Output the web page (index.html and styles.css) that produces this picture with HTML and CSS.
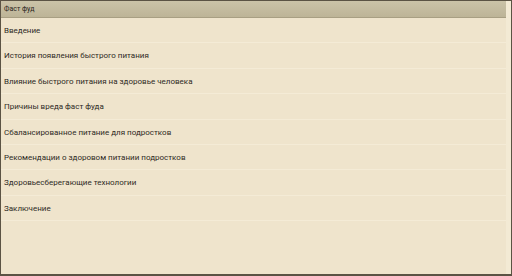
FILE: index.html
```html
<!DOCTYPE html>
<html lang="ru">
<head>
    <meta charset="UTF-8">
    <title>Фаст фуд</title>
    <link rel="stylesheet" href="styles.css">
</head>
<body>
    <div class="screen">
        <div class="title-bar">Фаст фуд</div>
        <ul class="topic-list">
            <li class="topic">Введение</li>
            <li class="topic">История появления быстрого питания</li>
            <li class="topic">Влияние быстрого питания на здоровье человека</li>
            <li class="topic">Причины вреда фаст фуда</li>
            <li class="topic">Сбалансированное питание для подростков</li>
            <li class="topic">Рекомендации о здоровом питании подростков</li>
            <li class="topic">Здоровьесберегающие технологии</li>
            <li class="topic">Заключение</li>
        </ul>
    </div>
</body>
</html>
```

FILE: styles.css
```css
* {
    margin: 0;
    padding: 0;
    box-sizing: border-box;
}

html, body {
    width: 512px;
    height: 276px;
    overflow: hidden;
}

body {
    font-family: Roboto, 'Noto Sans', sans-serif;
    background: #5b5344;
}

.screen {
    margin: 1px 1px 2px 1px;
    height: 273px;
    background: #efe4cc;
    border-right: 5px solid #f3ead4;
    display: flex;
    flex-direction: column;
}

.title-bar {
    height: 17px;
    padding: 0 3px;
    font-size: 7px;
    line-height: 17px;
    color: #2a2620;
    background: linear-gradient(to bottom, #cbc3a8 0%, #bdb497 100%);
    border-bottom: 1px solid #a89f83;
}

.topic-list {
    list-style: none;
}

.topic {
    height: 25.4px;
    padding: 0 3px;
    font-size: 8px;
    line-height: 25px;
    color: #2e2a24;
    border-bottom: 1px solid #f4ebd6;
}
```
